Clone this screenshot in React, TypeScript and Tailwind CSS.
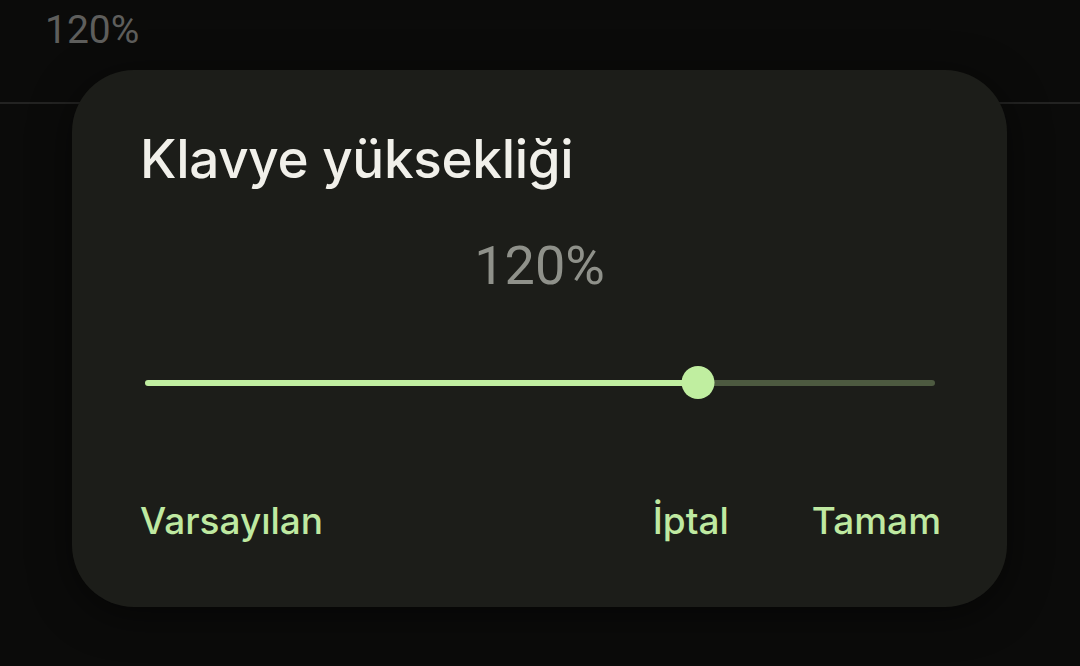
import React from 'react'

export default function App() {
  const value = 120
  const pct = 0.7 // thumb position along track

  return (
    <div className="relative h-[666px] w-[1080px] overflow-hidden bg-[#0b0b0a]" style={{ fontFamily: 'Inter, sans-serif' }}>
      {/* Background settings screen */}
      <div className="pl-[45px] pt-[8px] text-[39px] leading-[44px] text-[#5e5e5c]" style={{ fontFamily: 'Roboto, sans-serif' }}>
        {value}%
      </div>
      <div className="mt-[50px] h-[2px] w-full bg-[#232322]" />

      {/* Dialog */}
      <div className="absolute left-[72px] top-[70px] flex h-[537px] w-[935px] flex-col rounded-[62px] bg-[#1c1d19] px-[68px] shadow-[0_8px_40px_rgba(0,0,0,0.5)]">
        <h2 className="mt-[57px] text-[53px] font-medium leading-[64px] tracking-[-0.3px] text-[#f1f0ea]">
          Klavye yüksekliği
        </h2>

        <div className="mt-[43px] text-center text-[54px] leading-[64px] text-[#8f918a]" style={{ fontFamily: 'Roboto, sans-serif' }}>
          {value}%
        </div>

        {/* Slider */}
        <div className="relative mt-[68px] ml-[5px] mr-[4px] flex h-[34px] items-center">
          <div className="h-[6px] rounded-full bg-[#c0eea0]" style={{ width: `${pct * 100}%` }} />
          <div className="h-[6px] flex-1 rounded-full bg-[#4d5a40]" />
          <div
            className="absolute top-0 h-[33px] w-[33px] -translate-x-1/2 rounded-full bg-[#c0eea0]"
            style={{ left: `${pct * 100}%` }}
          />
        </div>

        <div className="mt-auto mb-[64px] flex items-center text-[37px] font-medium leading-[44px] text-[#bfe9a1]">
          <button className="mr-auto">Varsayılan</button>
          <button className="mr-[83px]">İptal</button>
          <button className="-mr-[2px]">Tamam</button>
        </div>
      </div>
    </div>
  )
}
